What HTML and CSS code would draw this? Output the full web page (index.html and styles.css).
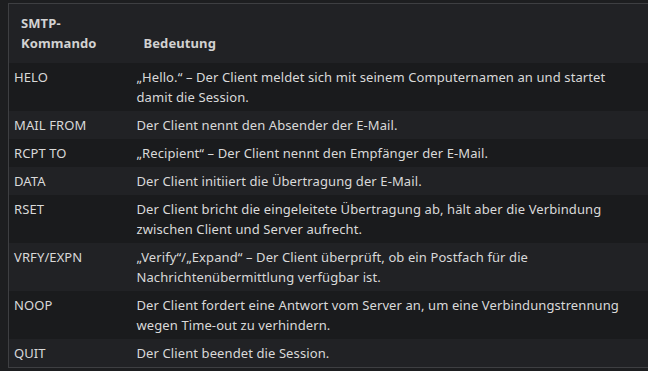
FILE: index.html
```html
<!DOCTYPE html>
<html lang="de">
<head>
<meta charset="utf-8">
<title>SMTP-Kommandos</title>
<link rel="stylesheet" href="styles.css">
</head>
<body>
<table class="smtp">
  <colgroup>
    <col class="col-cmd">
    <col class="col-desc">
  </colgroup>
  <thead>
    <tr>
      <th class="th-cmd">SMTP-Kommando</th>
      <th>Bedeutung</th>
    </tr>
  </thead>
  <tbody>
    <tr><td>HELO</td><td>„Hello.“ – Der Client meldet sich mit seinem Computernamen an und startet damit die Session.</td></tr>
    <tr><td>MAIL FROM</td><td>Der Client nennt den Absender der E-Mail.</td></tr>
    <tr><td>RCPT TO</td><td>„Recipient“ – Der Client nennt den Empfänger der E-Mail.</td></tr>
    <tr><td>DATA</td><td>Der Client initiiert die Übertragung der E-Mail.</td></tr>
    <tr><td>RSET</td><td>Der Client bricht die eingeleitete Übertragung ab, hält aber die Verbindung zwischen Client und Server aufrecht.</td></tr>
    <tr><td>VRFY/EXPN</td><td>„Verify“/„Expand“ – Der Client überprüft, ob ein Postfach für die Nachrichtenübermittlung verfügbar ist.</td></tr>
    <tr><td>NOOP</td><td>Der Client fordert eine Antwort vom Server an, um eine Verbindungstrennung wegen Time-out zu verhindern.</td></tr>
    <tr><td>QUIT</td><td>Der Client beendet die Session.</td></tr>
  </tbody>
</table>
</body>
</html>
```
FILE: styles.css
```css
html, body {
  margin: 0;
  background: #1d1e20;
}
body {
  padding: 3px 0 0 8px;
  overflow: hidden;
  font-family: "Noto Sans", "Open Sans", sans-serif;
  font-size: 13px;
  letter-spacing: 0.1px;
  color: #d9d9d9;
}
.smtp {
  width: 640px;
  table-layout: fixed;
  border-collapse: collapse;
  border: 1px solid #3e3f42;
  border-right: none;
}
.col-cmd { width: 123px; }
.smtp th {
  text-align: left;
  font-weight: bold;
  color: #d2d2d2;
  background: #212225;
  line-height: 20px;
  padding: 9px 12px 10px;
  vertical-align: bottom;
}
.smtp td {
  line-height: 20px;
  padding: 4px 5px;
  vertical-align: top;
}
.smtp td + td {
  padding-right: 22px;
}
.smtp tbody tr:nth-child(odd) { background: #1a1b1d; }
.smtp tbody tr:nth-child(even) { background: #212225; }
```
